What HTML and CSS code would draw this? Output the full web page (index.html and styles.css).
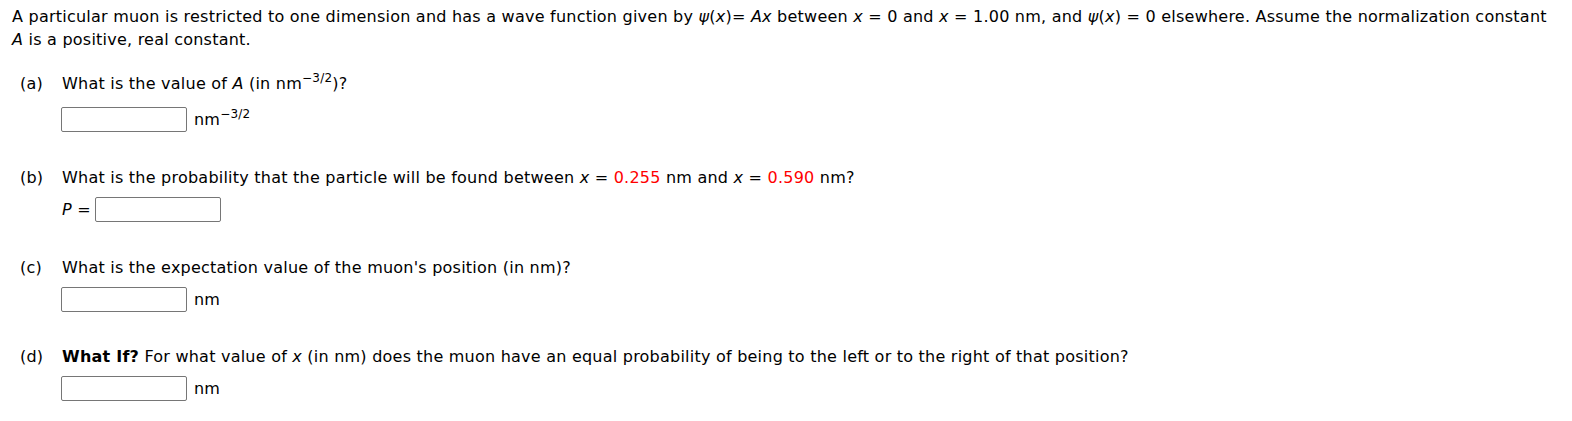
FILE: index.html
```html
<!DOCTYPE html>
<html>
<head>
<meta charset="utf-8">
<link rel="stylesheet" href="styles.css">
</head>
<body>
<div class="problem">
  <p class="intro">A particular muon is restricted to one dimension and has a wave function given by <i class="psi">ψ</i>(<i>x</i>)= <i>Ax</i> between <i>x</i> = 0 and <i>x</i> = 1.00 nm, and <i class="psi">ψ</i>(<i>x</i>) = 0 elsewhere. Assume the normalization constant <i>A</i> is a positive, real constant.</p>

  <div class="part part-a">
    <span class="lbl">(a)</span>
    <div class="pbody">
      <div class="qtext">What is the value of <i>A</i> (in nm<sup>−3/2</sup>)?</div>
      <div class="ans ans-a"><input type="text" class="box"><span class="unit">nm<sup class="usup">−3/2</sup></span></div>
    </div>
  </div>

  <div class="part">
    <span class="lbl">(b)</span>
    <div class="pbody">
      <div class="qtext">What is the probability that the particle will be found between <i>x</i> = <span class="red">0.255</span> nm and <i>x</i> = <span class="red">0.590</span> nm?</div>
      <div class="ans"><span class="pre"><i>P</i> =</span><input type="text" class="box box-p"></div>
    </div>
  </div>

  <div class="part">
    <span class="lbl">(c)</span>
    <div class="pbody">
      <div class="qtext">What is the expectation value of the muon's position (in nm)?</div>
      <div class="ans"><input type="text" class="box"><span class="unit">nm</span></div>
    </div>
  </div>

  <div class="part part-d">
    <span class="lbl">(d)</span>
    <div class="pbody">
      <div class="qtext"><b>What If?</b> For what value of <i>x</i> (in nm) does the muon have an equal probability of being to the left or to the right of that position?</div>
      <div class="ans"><input type="text" class="box"><span class="unit">nm</span></div>
    </div>
  </div>
</div>
</body>
</html>
```

FILE: styles.css
```css
html, body {
  margin: 0;
  padding: 0;
  background: #ffffff;
}
body {
  font-family: "DejaVu Sans", Verdana, sans-serif;
  font-size: 16px;
  color: #000000;
  letter-spacing: 0.23px;
}
.problem {
  padding: 5px 16px 0 12px;
}
.intro {
  margin: 0;
  line-height: 23px;
}
.psi {
  font-style: italic;
}
.part {
  display: flex;
  align-items: flex-start;
  margin-top: 34px;
}
.part-a {
  margin-top: 21px;
}
.part-d {
  margin-top: 33px;
}
.lbl {
  flex: none;
  box-sizing: border-box;
  width: 50px;
  padding-left: 8px;
  line-height: 23px;
}
.qtext {
  line-height: 23px;
}
sup {
  font-size: 12px;
  line-height: 0;
  vertical-align: 7px;
}
.usup {
  vertical-align: 7px;
}
.ans {
  display: flex;
  align-items: center;
  margin-top: 8px;
  line-height: 23px;
}
.ans-a {
  margin-top: 12px;
}
.box {
  width: 126px;
  height: 25px;
  box-sizing: border-box;
  border: 1px solid #767676;
  border-radius: 2px;
  padding: 0;
  margin: 0 0 0 -1px;
  background: #ffffff;
}
.box-p {
  margin-left: 0;
}
.unit {
  margin-left: 7px;
}
.pre {
  margin-right: 4px;
}
.red {
  color: #ff0000;
}
```
